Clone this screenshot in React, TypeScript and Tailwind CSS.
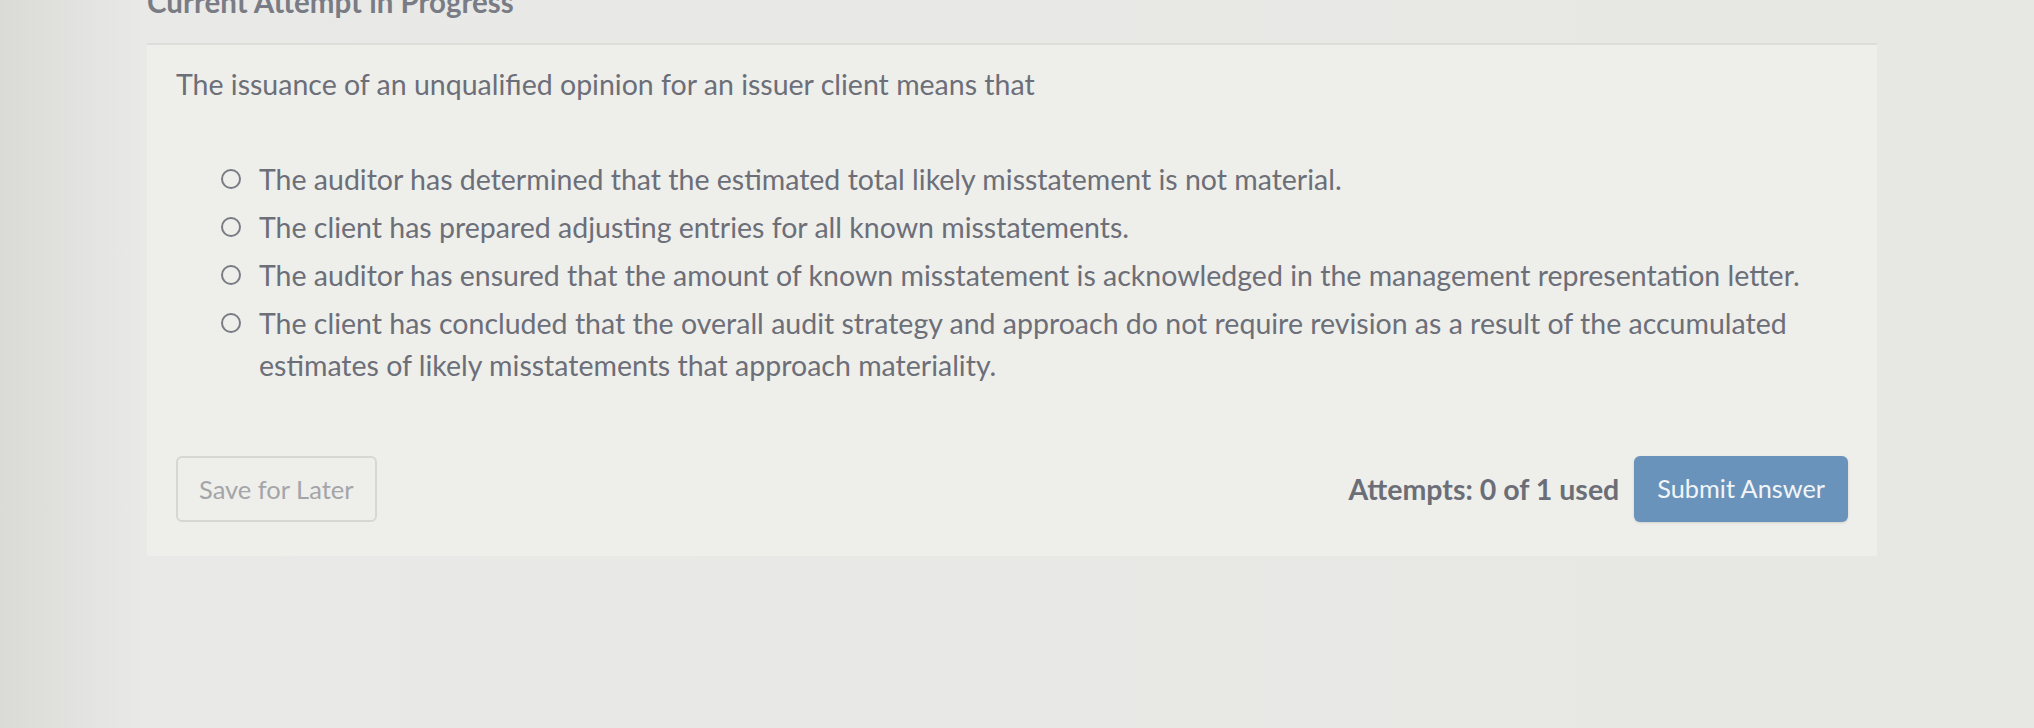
const options = [
  "The auditor has determined that the estimated total likely misstatement is not material.",
  "The client has prepared adjusting entries for all known misstatements.",
  "The auditor has ensured that the amount of known misstatement is acknowledged in the management representation letter.",
  "The client has concluded that the overall audit strategy and approach do not require revision as a result of the accumulated estimates of likely misstatements that approach materiality.",
]

export default function App() {
  return (
    <div className="h-[728px] w-full overflow-hidden bg-linear-to-r from-[#dadbd7] from-0% via-[#e9eae7] via-7% to-[#e7e7e4] font-['Lato','Noto_Sans',sans-serif]">
      <div className="ml-[147px] w-[1730px]">
        <h2 className="-mt-[16px] text-[29.5px] font-bold leading-[36px] text-[#797c85]">Current Attempt in Progress</h2>

        <div className="mt-[23px] border-t-2 border-[#dddeda] bg-[#eeeeeb] px-[29px] pt-[20px] pb-[34px]">
          <p className="text-[28.5px] leading-[38px] text-[#6c6e78]">
            The issuance of an unqualified opinion for an issuer client means that
          </p>

          <ul className="mt-[55px] flex flex-col gap-[6px] pl-[45px] pr-[10px]">
            {options.map((text) => (
              <li key={text} className="flex items-start gap-[18px]">
                <span className="mt-[11px] h-[20px] w-[20px] shrink-0 rounded-full border-2 border-[#7a7c84]" />
                <span className="text-[28.5px] leading-[42px] text-[#6c6e78]">{text}</span>
              </li>
            ))}
          </ul>

          <div className="mt-[70px] flex items-center justify-between">
            <button className="h-[66px] rounded-[6px] border-2 border-[#d6d7d4] px-[21px] text-[25.5px] text-[#a3a5a8]">
              Save for Later
            </button>
            <div className="flex items-center gap-[15px]">
              <span className="text-[28.5px] font-bold text-[#6c6e77]">Attempts: 0 of 1 used</span>
              <button className="h-[66px] rounded-[6px] bg-[#6a93bb] px-[23px] text-[25.3px] text-[#f2f5f8] shadow-sm">
                Submit Answer
              </button>
            </div>
          </div>
        </div>
      </div>
    </div>
  )
}
